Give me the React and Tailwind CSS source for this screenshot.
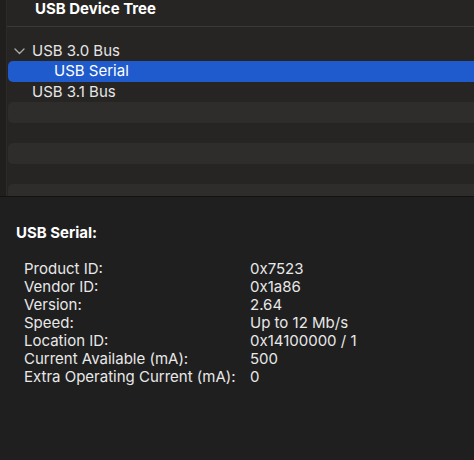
import React from 'react';

const rows = [
  { label: 'USB 3.0 Bus', indent: 'pl-[24px]', chevron: true },
  { label: 'USB Serial', indent: 'pl-[46px]', selected: true },
  { label: 'USB 3.1 Bus', indent: 'pl-[24px]' },
  { stripe: true },
  {},
  { stripe: true },
  {},
  { stripe: true },
];

const props = [
  ['Product ID:', '0x7523'],
  ['Vendor ID:', '0x1a86'],
  ['Version:', '2.64'],
  ['Speed:', 'Up to 12 Mb/s'],
  ['Location ID:', '0x14100000 / 1'],
  ['Current Available (mA):', '500'],
  ['Extra Operating Current (mA):', '0'],
];

const Chevron = () => (
  <svg width="11" height="7" viewBox="0 0 11 7" className="absolute left-[6px] top-[7px]">
    <path d="M1 1l4.5 4.5L10 1" fill="none" stroke="#a9a9a9" strokeWidth="1.4" strokeLinecap="round" strokeLinejoin="round" />
  </svg>
);

export default function App() {
  return (
    <div className="w-[474px] h-[460px] overflow-hidden bg-[#1f1f1f] text-[#e6e6e6] font-['Inter',sans-serif]">
      <div className="h-[196px] flex bg-[#262523] overflow-hidden">
        <div className="w-[7px] shrink-0 bg-[#211f1e] border-r border-[#2c2b29]" />
        <div className="flex-1 flex flex-col">
          <div className="h-[27px] shrink-0 border-b border-[#3a3938] pl-[28px] text-[15px] font-bold text-white leading-[17px]">
            USB Device Tree
          </div>
          <div className="shrink-0 pt-[13.5px] pl-[1px]">
            {rows.map((r, i) => (
              <div
                key={i}
                className={`relative h-[20.5px] text-[15px] leading-[20.5px] rounded-l-[5px] ${r.indent || ''} ${
                  r.selected ? 'bg-[#1f5bcc] text-white' : r.stripe ? 'bg-[#2e2d2b]' : ''
                }`}
              >
                {r.chevron && <Chevron />}
                {r.label}
              </div>
            ))}
          </div>
        </div>
      </div>
      <div className="h-[1px] bg-[#121212]" />
      <div className="pt-[27px] pl-[16px]">
        <div className="text-[15px] font-bold text-white leading-[18px]">USB Serial:</div>
        <div className="mt-[18px] pl-[8px] grid grid-cols-[226px_1fr] text-[15px] leading-[18px] text-[#e8e8e8]">
          {props.map(([k, v]) => (
            <React.Fragment key={k}>
              <div>{k}</div>
              <div>{v}</div>
            </React.Fragment>
          ))}
        </div>
      </div>
    </div>
  );
}
